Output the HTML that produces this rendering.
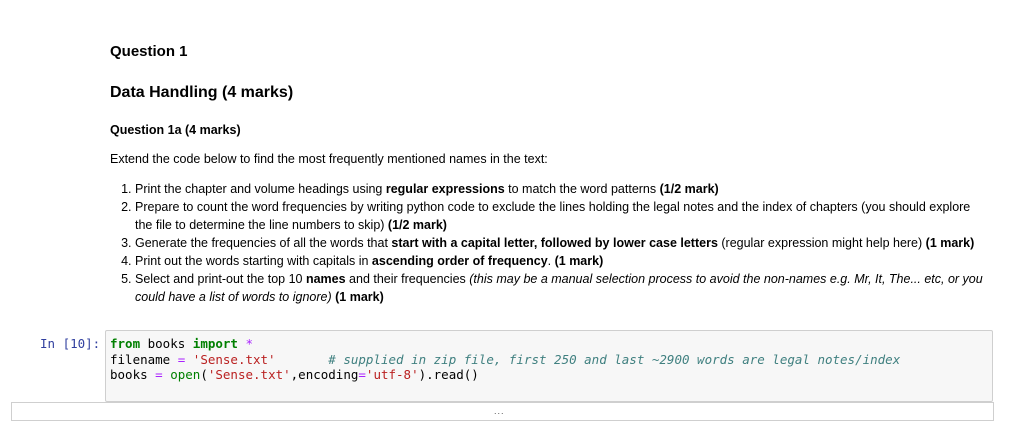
<!DOCTYPE html>
<html><head><style>
body{margin:0;width:1010px;height:437px;background:#fff;font-family:"Liberation Sans",sans-serif;color:#000;position:relative;overflow:hidden}
.a{position:absolute;white-space:nowrap}
.t{font-size:12.5px}
ol{position:absolute;left:110px;top:180px;margin:0;padding-left:25px;width:850px;font-size:12.5px;line-height:18px}
.code{position:absolute;left:105px;top:330px;width:886px;height:70px;background:#f7f7f7;border:1px solid #cfcfcf;border-radius:2px}
pre{margin:0;position:absolute;left:4px;top:5px;font-family:"DejaVu Sans Mono","Liberation Mono",monospace;font-size:12.5px;line-height:15.5px;color:#000}
.k{color:#008000;font-weight:bold}.o{color:#aa22ff}.s{color:#ba2121}.c{color:#408080;font-style:italic}.b{color:#008000}
</style></head><body>
<div class="a" style="left:110px;top:43px;font-size:15px;font-weight:bold">Question 1</div>
<div class="a" style="left:110px;top:84px;font-size:16px;font-weight:bold">Data Handling (4 marks)</div>
<div class="a t" style="left:110px;top:123px;font-weight:bold">Question 1a (4 marks)</div>
<div class="a t" style="left:110px;top:152px">Extend the code below to find the most frequently mentioned names in the text:</div>
<ol>
<li>Print the chapter and volume headings using <b>regular expressions</b> to match the word patterns <b>(1/2 mark)</b></li>
<li>Prepare to count the word frequencies by writing python code to exclude the lines holding the legal notes and the index of chapters (you should explore the file to determine the line numbers to skip) <b>(1/2 mark)</b></li>
<li>Generate the frequencies of all the words that <b>start with a capital letter, followed by lower case letters</b> (regular expression might help here) <b>(1 mark)</b></li>
<li>Print out the words starting with capitals in <b>ascending order of frequency</b>. <b>(1 mark)</b></li>
<li>Select and print-out the top 10 <b>names</b> and their frequencies <i>(this may be a manual selection process to avoid the non-names e.g. Mr, It, The... etc, or you could have a list of words to ignore)</i> <b>(1 mark)</b></li>
</ol>
<div class="a" style="left:40px;top:336px;font-family:'DejaVu Sans Mono',monospace;font-size:12.5px;color:#303f9f">In [10]:</div>
<div class="code"><pre><span class="k">from</span> books <span class="k">import</span> <span class="o">*</span>
filename <span class="o">=</span> <span class="s">'Sense.txt'</span>       <span class="c"># supplied in zip file, first 250 and last ~2900 words are legal notes/index</span>
books <span class="o">=</span> <span class="b">open</span>(<span class="s">'Sense.txt'</span>,encoding<span class="o">=</span><span class="s">'utf-8'</span>).read()</pre></div>
<div style="position:absolute;left:11px;top:402px;width:981px;height:17px;border:1px solid #cfcfcf;background:#fff"></div>
<div class="a" style="left:494px;top:406px;font-size:9px;color:#555;letter-spacing:1px">...</div>
</body></html>
